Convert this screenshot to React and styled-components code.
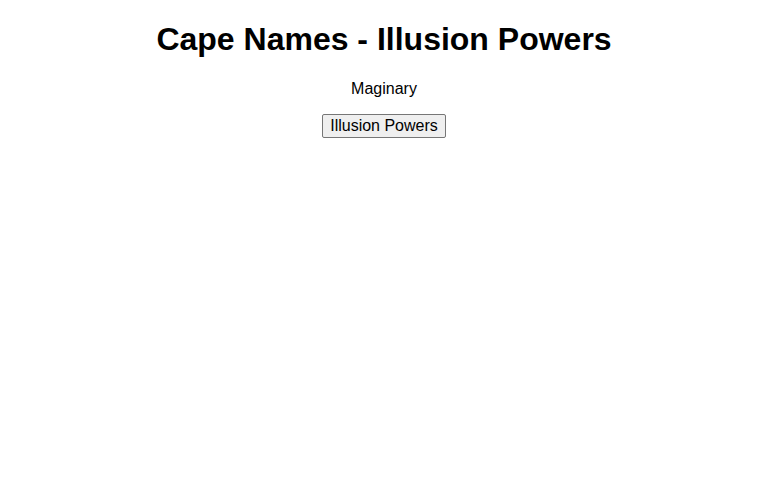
import React from 'react';
import styled, { createGlobalStyle } from 'styled-components';

const GlobalStyle = createGlobalStyle`
  body {
    margin: 0 8px;
    background: #fff;
    color: #000;
    font-family: "Liberation Sans", Arial, sans-serif;
  }
`;

const Page = styled.div`
  text-align: center;
`;

const Title = styled.h1`
  font-size: 32px;
  font-weight: bold;
  margin: 21.44px 0;
`;

const Name = styled.p`
  font-size: 16px;
  margin: 16px 0;
`;

const Actions = styled.div`
  margin: 16px 0;
`;

const Button = styled.button`
  font-family: "Liberation Sans", Arial, sans-serif;
  font-size: 16px;
  color: #000;
  background: #efefef;
  border: 1px solid #767676;
  border-radius: 2px;
  padding: 2px 7px;
  line-height: normal;
  cursor: pointer;
  &:hover {
    background: #e5e5e5;
  }
`;

const names = ['Maginary', 'Phantasm', 'Mirage', 'Veil', 'Glamour'];

const App = () => {
  const [index, setIndex] = React.useState(0);

  return (
    <Page>
      <GlobalStyle />
      <Title>Cape Names - Illusion Powers</Title>
      <Name>{names[index]}</Name>
      <Actions>
        <Button onClick={() => setIndex((i) => (i + 1) % names.length)}>Illusion Powers</Button>
      </Actions>
    </Page>
  );
};

export default App;
